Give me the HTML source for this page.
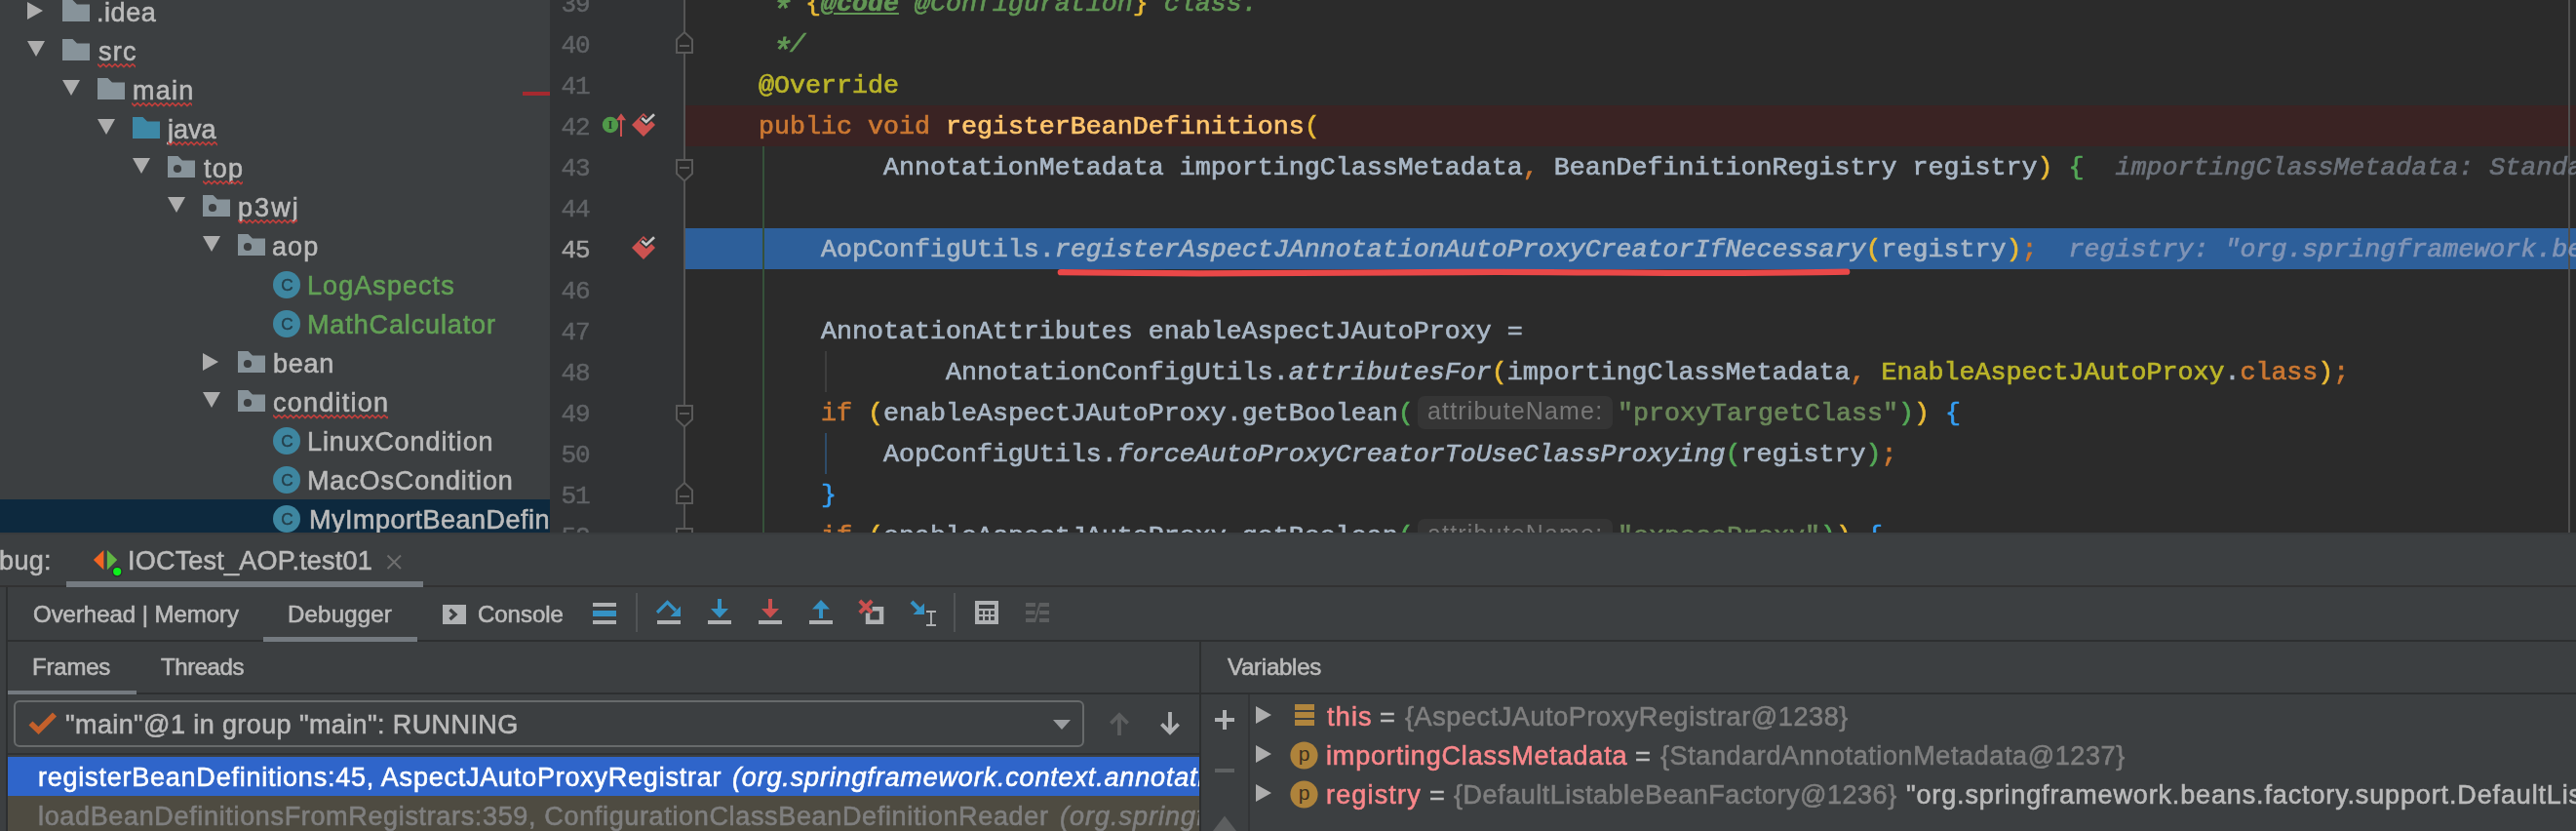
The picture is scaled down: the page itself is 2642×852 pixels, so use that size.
<!DOCTYPE html>
<html lang="en"><head><meta charset="utf-8"><title>IDE debug</title><style>
html,body{margin:0;padding:0;background:#2b2b2b;}
body{width:2642px;height:852px;overflow:hidden;position:relative;font-family:"Liberation Sans", sans-serif;-webkit-font-smoothing:antialiased;}
.t,.cl,.ln{will-change:transform}
.b{position:absolute;display:block}
.t{position:absolute;white-space:pre;height:40px;line-height:40px;-webkit-text-stroke:0.6px currentColor}
.cl{position:absolute;left:150px;height:42px;line-height:42px;white-space:pre;font-family:"Liberation Mono", monospace;font-size:26.667px;color:#a9b7c6;letter-spacing:-0.003px;-webkit-text-stroke:0.7px currentColor}
.ln{position:absolute;left:0;width:40.4px;text-align:right;height:42px;line-height:44px;font-family:"Liberation Mono", monospace;font-size:26px;color:#606366;letter-spacing:-1.1px;-webkit-text-stroke:0.5px currentColor}
.ast{display:inline-block;position:relative;top:9px;transform:scale(1.3)}
.i{font-style:italic} .bu{font-weight:bold;text-decoration:underline}
.k{color:#cc7832} .m{color:#ffc66d} .a{color:#bbb529} .d{color:#629755} .s{color:#6a8759}
.y{color:#e8ba36} .g{color:#54a857} .q{color:#359ff4} .h{color:#6c727b} .h2{color:#8094b6}
.hint{display:inline-block;box-sizing:border-box;vertical-align:top;width:199.8px;margin:3px 5.5px 0 4px;height:34px;line-height:30px;border-radius:7px;background:#353535;color:#787878;font-family:"Liberation Sans", sans-serif;font-size:25px;letter-spacing:1.17px;text-align:center;-webkit-text-stroke:0;text-indent:1px}
</style></head>
<body>
<div class="b" style="left:0px;top:0px;width:564px;height:546px;background:#3c3f41;"></div>
<div class="b" style="left:564px;top:0px;width:139px;height:546px;background:#313335;"></div>
<div class="b" style="left:703px;top:0px;width:1939px;height:546px;background:#2b2b2b;"></div>
<div class="b" style="left:0px;top:546px;width:2642px;height:306px;background:#3c3f41;"></div>
<div class="b" style="left:0;top:0;width:564px;height:546px;overflow:hidden">
<div class="b" style="left:0px;top:512px;width:564px;height:40px;background:#0d293e;"></div>
<svg class="b" style="left:28px;top:2px;" width="16" height="18" viewBox="0 0 16 18"><path d="M0,0 L16,9 L0,18 Z" fill="#adadad"/></svg>
<svg class="b" style="left:64px;top:0px;" width="28" height="22" viewBox="0 0 28 22"><path d="M0,0 H10.5 L15,4.5 H28 V22 H0 Z" fill="#87939a"/></svg>
<div id="tree0" class="t " style="left:99.00px;top:-6.96px;font-size:27px;color:#bbbbbb;letter-spacing:0.550px;">.idea</div>
<svg class="b" style="left:28px;top:42px;" width="18" height="16" viewBox="0 0 18 16"><path d="M0,0 L18,0 L9,16 Z" fill="#adadad"/></svg>
<svg class="b" style="left:64px;top:40px;" width="28" height="22" viewBox="0 0 28 22"><path d="M0,0 H10.5 L15,4.5 H28 V22 H0 Z" fill="#87939a"/></svg>
<div id="tree1" class="t " style="left:101.00px;top:33.04px;font-size:27px;color:#bbbbbb;letter-spacing:1.200px;">src</div>
<svg class="b" style="left:99.6px;top:65.4px;" width="39.6" height="5" viewBox="0 0 39.6 5"><polyline points="0,0.7 3,3.6 6,0.7 9,3.6 12,0.7 15,3.6 18,0.7 21,3.6 24,0.7 27,3.6 30,0.7 33,3.6 36,0.7 39,3.6 42,0.7" fill="none" stroke="#bc3f3c" stroke-width="1.8"/></svg>
<svg class="b" style="left:64px;top:82px;" width="18" height="16" viewBox="0 0 18 16"><path d="M0,0 L18,0 L9,16 Z" fill="#adadad"/></svg>
<svg class="b" style="left:100px;top:80px;" width="28" height="22" viewBox="0 0 28 22"><path d="M0,0 H10.5 L15,4.5 H28 V22 H0 Z" fill="#87939a"/></svg>
<div id="tree2" class="t " style="left:135.50px;top:73.04px;font-size:27px;color:#bbbbbb;letter-spacing:1.266px;">main</div>
<svg class="b" style="left:135.3px;top:105.4px;" width="61.7" height="5" viewBox="0 0 61.7 5"><polyline points="0,0.7 3,3.6 6,0.7 9,3.6 12,0.7 15,3.6 18,0.7 21,3.6 24,0.7 27,3.6 30,0.7 33,3.6 36,0.7 39,3.6 42,0.7 45,3.6 48,0.7 51,3.6 54,0.7 57,3.6 60,0.7 63,3.6" fill="none" stroke="#bc3f3c" stroke-width="1.8"/></svg>
<svg class="b" style="left:100px;top:122px;" width="18" height="16" viewBox="0 0 18 16"><path d="M0,0 L18,0 L9,16 Z" fill="#adadad"/></svg>
<svg class="b" style="left:136px;top:120px;" width="28" height="22" viewBox="0 0 28 22"><path d="M0,0 H10.5 L15,4.5 H28 V22 H0 Z" fill="#3d88a6"/></svg>
<div id="tree3" class="t " style="left:172.00px;top:113.04px;font-size:27px;color:#bbbbbb;">java</div>
<svg class="b" style="left:172px;top:145.4px;" width="51" height="5" viewBox="0 0 51 5"><polyline points="0,0.7 3,3.6 6,0.7 9,3.6 12,0.7 15,3.6 18,0.7 21,3.6 24,0.7 27,3.6 30,0.7 33,3.6 36,0.7 39,3.6 42,0.7 45,3.6 48,0.7 51,3.6 54,0.7" fill="none" stroke="#bc3f3c" stroke-width="1.8"/></svg>
<svg class="b" style="left:136px;top:162px;" width="18" height="16" viewBox="0 0 18 16"><path d="M0,0 L18,0 L9,16 Z" fill="#adadad"/></svg>
<svg class="b" style="left:172px;top:160px;" width="28" height="22" viewBox="0 0 28 22"><path d="M0,0 H10.5 L15,4.5 H28 V22 H0 Z" fill="#87939a"/><circle cx="10" cy="13" r="4.1" fill="#3c3f41"/></svg>
<div id="tree4" class="t " style="left:208.50px;top:153.04px;font-size:27px;color:#bbbbbb;letter-spacing:1.200px;">top</div>
<svg class="b" style="left:207.7px;top:185.4px;" width="41.6" height="5" viewBox="0 0 41.6 5"><polyline points="0,0.7 3,3.6 6,0.7 9,3.6 12,0.7 15,3.6 18,0.7 21,3.6 24,0.7 27,3.6 30,0.7 33,3.6 36,0.7 39,3.6 42,0.7" fill="none" stroke="#bc3f3c" stroke-width="1.8"/></svg>
<svg class="b" style="left:172px;top:202px;" width="18" height="16" viewBox="0 0 18 16"><path d="M0,0 L18,0 L9,16 Z" fill="#adadad"/></svg>
<svg class="b" style="left:208px;top:200px;" width="28" height="22" viewBox="0 0 28 22"><path d="M0,0 H10.5 L15,4.5 H28 V22 H0 Z" fill="#87939a"/><circle cx="10" cy="13" r="4.1" fill="#3c3f41"/></svg>
<div id="tree5" class="t " style="left:244.00px;top:193.04px;font-size:27px;color:#bbbbbb;letter-spacing:2.067px;">p3wj</div>
<svg class="b" style="left:243.6px;top:225.4px;" width="61.3" height="5" viewBox="0 0 61.3 5"><polyline points="0,0.7 3,3.6 6,0.7 9,3.6 12,0.7 15,3.6 18,0.7 21,3.6 24,0.7 27,3.6 30,0.7 33,3.6 36,0.7 39,3.6 42,0.7 45,3.6 48,0.7 51,3.6 54,0.7 57,3.6 60,0.7 63,3.6" fill="none" stroke="#bc3f3c" stroke-width="1.8"/></svg>
<svg class="b" style="left:208px;top:242px;" width="18" height="16" viewBox="0 0 18 16"><path d="M0,0 L18,0 L9,16 Z" fill="#adadad"/></svg>
<svg class="b" style="left:244px;top:240px;" width="28" height="22" viewBox="0 0 28 22"><path d="M0,0 H10.5 L15,4.5 H28 V22 H0 Z" fill="#87939a"/><circle cx="10" cy="13" r="4.1" fill="#3c3f41"/></svg>
<div id="tree6" class="t " style="left:279.00px;top:233.04px;font-size:27px;color:#bbbbbb;letter-spacing:1.100px;">aop</div>
<svg class="b" style="left:280px;top:278px;" width="28" height="28" viewBox="0 0 28 28"><circle cx="14" cy="14" r="14" fill="#3e86a0"/><text x="14.4" y="20.2" text-anchor="middle" font-family="Liberation Sans, sans-serif" font-size="17.2" fill="#25404c" stroke="#25404c" stroke-width="0.45">C</text></svg>
<div id="tree7" class="t " style="left:315.00px;top:273.04px;font-size:27px;color:#62a055;letter-spacing:1.066px;">LogAspects</div>
<svg class="b" style="left:280px;top:318px;" width="28" height="28" viewBox="0 0 28 28"><circle cx="14" cy="14" r="14" fill="#3e86a0"/><text x="14.4" y="20.2" text-anchor="middle" font-family="Liberation Sans, sans-serif" font-size="17.2" fill="#25404c" stroke="#25404c" stroke-width="0.45">C</text></svg>
<div id="tree8" class="t " style="left:315.00px;top:313.04px;font-size:27px;color:#62a055;letter-spacing:0.876px;">MathCalculator</div>
<svg class="b" style="left:208px;top:362px;" width="16" height="18" viewBox="0 0 16 18"><path d="M0,0 L16,9 L0,18 Z" fill="#adadad"/></svg>
<svg class="b" style="left:244px;top:360px;" width="28" height="22" viewBox="0 0 28 22"><path d="M0,0 H10.5 L15,4.5 H28 V22 H0 Z" fill="#87939a"/><circle cx="10" cy="13" r="4.1" fill="#3c3f41"/></svg>
<div id="tree9" class="t " style="left:280.00px;top:353.04px;font-size:27px;color:#bbbbbb;letter-spacing:0.734px;">bean</div>
<svg class="b" style="left:208px;top:402px;" width="18" height="16" viewBox="0 0 18 16"><path d="M0,0 L18,0 L9,16 Z" fill="#adadad"/></svg>
<svg class="b" style="left:244px;top:400px;" width="28" height="22" viewBox="0 0 28 22"><path d="M0,0 H10.5 L15,4.5 H28 V22 H0 Z" fill="#87939a"/><circle cx="10" cy="13" r="4.1" fill="#3c3f41"/></svg>
<div id="tree10" class="t " style="left:280.00px;top:393.04px;font-size:27px;color:#bbbbbb;letter-spacing:1.227px;">condition</div>
<svg class="b" style="left:280px;top:425.4px;" width="117.7" height="5" viewBox="0 0 117.7 5"><polyline points="0,0.7 3,3.6 6,0.7 9,3.6 12,0.7 15,3.6 18,0.7 21,3.6 24,0.7 27,3.6 30,0.7 33,3.6 36,0.7 39,3.6 42,0.7 45,3.6 48,0.7 51,3.6 54,0.7 57,3.6 60,0.7 63,3.6 66,0.7 69,3.6 72,0.7 75,3.6 78,0.7 81,3.6 84,0.7 87,3.6 90,0.7 93,3.6 96,0.7 99,3.6 102,0.7 105,3.6 108,0.7 111,3.6 114,0.7 117,3.6 120,0.7" fill="none" stroke="#bc3f3c" stroke-width="1.8"/></svg>
<svg class="b" style="left:280px;top:438px;" width="28" height="28" viewBox="0 0 28 28"><circle cx="14" cy="14" r="14" fill="#3e86a0"/><text x="14.4" y="20.2" text-anchor="middle" font-family="Liberation Sans, sans-serif" font-size="17.2" fill="#25404c" stroke="#25404c" stroke-width="0.45">C</text></svg>
<div id="tree11" class="t " style="left:315.00px;top:433.04px;font-size:27px;color:#bbbbbb;letter-spacing:0.924px;">LinuxCondition</div>
<svg class="b" style="left:280px;top:478px;" width="28" height="28" viewBox="0 0 28 28"><circle cx="14" cy="14" r="14" fill="#3e86a0"/><text x="14.4" y="20.2" text-anchor="middle" font-family="Liberation Sans, sans-serif" font-size="17.2" fill="#25404c" stroke="#25404c" stroke-width="0.45">C</text></svg>
<div id="tree12" class="t " style="left:315.00px;top:473.04px;font-size:27px;color:#bbbbbb;letter-spacing:0.861px;">MacOsCondition</div>
<svg class="b" style="left:280px;top:518px;" width="28" height="28" viewBox="0 0 28 28"><circle cx="14" cy="14" r="14" fill="#3e86a0"/><text x="14.4" y="20.2" text-anchor="middle" font-family="Liberation Sans, sans-serif" font-size="17.2" fill="#25404c" stroke="#25404c" stroke-width="0.45">C</text></svg>
<div id="tree13" class="t " style="left:316.80px;top:513.04px;font-size:27px;color:#bbbbbb;letter-spacing:0.500px;">MyImportBeanDefinitionRegistrar</div>
<div class="b" style="left:536px;top:94px;width:28px;height:4px;background:#a52a2f;"></div>
</div>
<div class="b" style="left:564px;top:0;width:2078px;height:546px;overflow:hidden">
<div class="b" style="left:139px;top:108px;width:1939px;height:42px;background:#3a2323;"></div>
<div class="b" style="left:139px;top:234px;width:1939px;height:42px;background:#2d5f9a;"></div>
<div class="b" style="left:2070px;top:0px;width:2px;height:546px;background:#4f4f4f;"></div>
<div class="b" style="left:137px;top:0px;width:2px;height:546px;background:#555555;"></div>
<div class="b" style="left:218px;top:150px;width:2px;height:396px;background:#36513a;"></div>
<div class="b" style="left:282px;top:360px;width:2px;height:42px;background:#3e3e3e;"></div>
<div class="b" style="left:282px;top:444px;width:2px;height:42px;background:#2f4c69;"></div>
<svg class="b" style="left:128px;top:31px;" width="20" height="25" viewBox="0 0 20 25"><path d="M2,23 H18 V9.5 L10,2 L2,9.5 Z" fill="#2b2b2b" stroke="#5a5a5a" stroke-width="2"/><rect x="5" y="15" width="10" height="2" fill="#5a5a5a"/></svg>
<svg class="b" style="left:128px;top:162px;" width="20" height="25" viewBox="0 0 20 25"><path d="M2,2 H18 V16 L10,23.5 L2,16 Z" fill="#2b2b2b" stroke="#5a5a5a" stroke-width="2"/><rect x="5" y="9" width="10" height="2" fill="#5a5a5a"/></svg>
<svg class="b" style="left:128px;top:414px;" width="20" height="25" viewBox="0 0 20 25"><path d="M2,2 H18 V16 L10,23.5 L2,16 Z" fill="#2b2b2b" stroke="#5a5a5a" stroke-width="2"/><rect x="5" y="9" width="10" height="2" fill="#5a5a5a"/></svg>
<svg class="b" style="left:128px;top:493px;" width="20" height="25" viewBox="0 0 20 25"><path d="M2,23 H18 V9.5 L10,2 L2,9.5 Z" fill="#2b2b2b" stroke="#5a5a5a" stroke-width="2"/><rect x="5" y="15" width="10" height="2" fill="#5a5a5a"/></svg>
<svg class="b" style="left:128px;top:540px;" width="20" height="25" viewBox="0 0 20 25"><path d="M2,2 H18 V16 L10,23.5 L2,16 Z" fill="#2b2b2b" stroke="#5a5a5a" stroke-width="2"/><rect x="5" y="9" width="10" height="2" fill="#5a5a5a"/></svg>
<div class="ln" style="top:-17px;color:#606366">39</div>
<div class="ln" style="top:25px;color:#606366">40</div>
<div class="ln" style="top:67px;color:#606366">41</div>
<div class="ln" style="top:109px;color:#606366">42</div>
<div class="ln" style="top:151px;color:#606366">43</div>
<div class="ln" style="top:193px;color:#606366">44</div>
<div class="ln" style="top:235px;color:#a4a3a3">45</div>
<div class="ln" style="top:277px;color:#606366">46</div>
<div class="ln" style="top:319px;color:#606366">47</div>
<div class="ln" style="top:361px;color:#606366">48</div>
<div class="ln" style="top:403px;color:#606366">49</div>
<div class="ln" style="top:445px;color:#606366">50</div>
<div class="ln" style="top:487px;color:#606366">51</div>
<div class="ln" style="top:529px;color:#606366">52</div>
<svg class="b" style="left:82px;top:112px;" width="30" height="34" viewBox="0 0 30 34"><path d="M14,4 L26,16 L14,28 L2,16 Z" fill="#cc5250"/><path d="M11.6,8.4 L16.8,13 L25.8,4.4" fill="none" stroke="#313335" stroke-width="6"/><path d="M12.3,9 L16.8,13 L25,5.2" fill="none" stroke="#c6c6c6" stroke-width="2.7"/></svg>
<svg class="b" style="left:82px;top:238px;" width="30" height="34" viewBox="0 0 30 34"><path d="M14,4 L26,16 L14,28 L2,16 Z" fill="#cc5250"/><path d="M11.6,8.4 L16.8,13 L25.8,4.4" fill="none" stroke="#313335" stroke-width="6"/><path d="M12.3,9 L16.8,13 L25,5.2" fill="none" stroke="#c6c6c6" stroke-width="2.7"/></svg>
<svg class="b" style="left:52px;top:114px;" width="28" height="28" viewBox="0 0 28 28"><circle cx="10" cy="14" r="8.2" fill="#50994a"/><text x="10" y="18.3" text-anchor="middle" font-family="Liberation Serif, serif" font-weight="bold" font-size="12.5" fill="#233b26">I</text><path d="M21,26 V5" stroke="#cc5250" stroke-width="2" fill="none"/><path d="M15.9,9.3 L21,2.3 L26.1,9.3 Z" fill="#cc5250"/></svg>
<div class="cl" id="cl39" style="top:-17px">     <span class="d i ast">*</span> <span class="y">{</span><span class="d i bu">@code</span><span class="d i"> @Configuration</span><span class="y">}</span><span class="d i"> class.</span></div>
<div class="cl" id="cl40" style="top:25px">     <span class="d i ast">*</span><span class="d i">/</span></div>
<div class="cl" id="cl41" style="top:67px">    <span class="a">@Override</span></div>
<div class="cl" id="cl42" style="top:109px">    <span class="k">public void </span><span class="m">registerBeanDefinitions</span><span class="y">(</span></div>
<div class="cl" id="cl43" style="top:151px">            AnnotationMetadata importingClassMetadata<span class="k">,</span> BeanDefinitionRegistry registry<span class="y">)</span> <span class="g">{</span>  <span class="h i">importingClassMetadata: Standard</span></div>
<div class="cl" id="cl44" style="top:193px"></div>
<div class="cl" id="cl45" style="top:235px">        AopConfigUtils.<span class="i">registerAspectJAnnotationAutoProxyCreatorIfNecessary</span><span class="y">(</span>registry<span class="y">)</span><span class="k">;</span>  <span class="h2 i">registry: "org.springframework.beans</span></div>
<div class="cl" id="cl46" style="top:277px"></div>
<div class="cl" id="cl47" style="top:319px">        AnnotationAttributes enableAspectJAutoProxy =</div>
<div class="cl" id="cl48" style="top:361px">                AnnotationConfigUtils.<span class="i">attributesFor</span><span class="y">(</span>importingClassMetadata<span class="k">,</span> <span class="a">EnableAspectJAutoProxy</span>.<span class="k">class</span><span class="y">)</span><span class="k">;</span></div>
<div class="cl" id="cl49" style="top:403px">        <span class="k">if</span> <span class="y">(</span>enableAspectJAutoProxy.getBoolean<span class="g">(</span><span class="hint">attributeName:</span><span class="s">"proxyTargetClass"</span><span class="g">)</span><span class="y">)</span> <span class="q">{</span></div>
<div class="cl" id="cl50" style="top:445px">            AopConfigUtils.<span class="i">forceAutoProxyCreatorToUseClassProxying</span><span class="g">(</span>registry<span class="g">)</span><span class="k">;</span></div>
<div class="cl" id="cl51" style="top:487px">        <span class="q">}</span></div>
<div class="cl" id="cl52" style="top:529px">        <span class="k">if</span> <span class="y">(</span>enableAspectJAutoProxy.getBoolean<span class="g">(</span><span class="hint">attributeName:</span><span class="s">"exposeProxy"</span><span class="g">)</span><span class="y">)</span> <span class="q">{</span></div>
<svg class="b" style="left:516px;top:270px;" width="830" height="16" viewBox="0 0 830 16"><path d="M7.8,9.2 C60,9.4 100,10.3 150,10.3 S340,9.6 420,9.0 S600,10 680,9.9 S780,9 814.2,8.7" fill="none" stroke="#ea4848" stroke-width="6.3" stroke-linecap="round"/></svg>
</div>
<div class="b" style="left:0px;top:546px;width:2642px;height:1.5px;background:#383b3d;"></div>
<div class="b" style="left:0px;top:600px;width:2642px;height:2px;background:#323232;"></div>
<div class="b" style="left:68px;top:596px;width:366px;height:6px;background:#747a80;"></div>
<div id="dbg" class="t " style="left:-36.00px;top:555.14px;font-size:27px;color:#bbbbbb;letter-spacing:0.300px;">Debug:</div>
<div id="tab" class="t " style="left:131.00px;top:555.14px;font-size:27px;color:#bbbbbb;letter-spacing:0.213px;">IOCTest_AOP.test01</div>
<svg class="b" style="left:95px;top:562px;" width="32" height="32" viewBox="0 0 32 32"><path d="M11.4,2 V22.2 L0.9,12.1 Z" fill="#f26522"/><path d="M14.9,2 L25.2,12.1 L14.9,22.2 Z" fill="#62b543"/><circle cx="25.2" cy="24.1" r="5.4" fill="#2a2c2d"/><circle cx="25.2" cy="24.1" r="4.1" fill="#0df01c"/></svg>
<svg class="b" style="left:396px;top:568px;" width="17" height="17" viewBox="0 0 17 17"><path d="M1.5,1.5 L15,15 M15,1.5 L1.5,15" stroke="#6e6e6e" stroke-width="2" fill="none"/></svg>
<div class="b" style="left:6px;top:602px;width:2px;height:250px;background:#2d2f30;"></div>
<div class="b" style="left:8px;top:656px;width:2634px;height:2px;background:#2d2f30;"></div>
<div class="b" style="left:270px;top:653px;width:158px;height:5px;background:#747a80;"></div>
<div id="ovh" class="t " style="left:33.50px;top:610.18px;font-size:24px;color:#bbbbbb;letter-spacing:-0.038px;">Overhead | Memory</div>
<div id="dbgr" class="t " style="left:294.50px;top:610.18px;font-size:24px;color:#bbbbbb;letter-spacing:0.201px;">Debugger</div>
<div id="cons" class="t " style="left:489.50px;top:610.18px;font-size:24px;color:#bbbbbb;letter-spacing:-0.033px;">Console</div>
<svg class="b" style="left:454px;top:620px;" width="24" height="20" viewBox="0 0 24 20"><rect width="24" height="20" fill="#afb1b3"/><path d="M7.5,5 L13,10 L7.5,15" fill="none" stroke="#3c3f41" stroke-width="3.4"/></svg>
<svg class="b" style="left:608px;top:616px;" width="24" height="26" viewBox="0 0 24 26"><rect y="2" width="24" height="4" fill="#afb1b3"/><rect y="10" width="24" height="6" fill="#3592c4"/><rect y="20" width="24" height="4" fill="#afb1b3"/></svg>
<div class="b" style="left:652px;top:608px;width:2px;height:40px;background:#515456;"></div>
<svg class="b" style="left:672px;top:612px;" width="28" height="30" viewBox="0 0 28 30"><path d="M2,16 L12.5,5.5 L21,14" fill="none" stroke="#3592c4" stroke-width="3.2"/><path d="M26,9.5 V20 H15.5 Z" fill="#3592c4"/><rect x="2" y="24" width="24" height="4" fill="#afb1b3"/></svg>
<svg class="b" style="left:724px;top:612px;" width="28" height="30" viewBox="0 0 28 30"><path d="M14,2 V14" stroke="#3592c4" stroke-width="4" fill="none"/><path d="M5,12 H23 L14,21.5 Z" fill="#3592c4"/><rect x="2" y="24" width="24" height="4" fill="#afb1b3"/></svg>
<svg class="b" style="left:776px;top:612px;" width="28" height="30" viewBox="0 0 28 30"><path d="M14,2 V14" stroke="#c9504f" stroke-width="4" fill="none"/><path d="M5,12 H23 L14,21.5 Z" fill="#c9504f"/><rect x="2" y="24" width="24" height="4" fill="#afb1b3"/></svg>
<svg class="b" style="left:828px;top:612px;" width="28" height="30" viewBox="0 0 28 30"><path d="M14,22 V10" stroke="#3592c4" stroke-width="4" fill="none"/><path d="M5,12.5 H23 L14,3 Z" fill="#3592c4"/><rect x="2" y="24" width="24" height="4" fill="#afb1b3"/></svg>
<svg class="b" style="left:880px;top:614px;" width="28" height="28" viewBox="0 0 28 28"><path d="M1.8,2 L14.2,14.2 M14.2,2 L1.8,14.2" stroke="#c9504f" stroke-width="4" fill="none"/><path d="M14.6,10.25 H24.05 V23.85 H10.05 V14.6" fill="none" stroke="#afb1b3" stroke-width="4.5"/></svg>
<svg class="b" style="left:932px;top:614px;" width="30" height="30" viewBox="0 0 30 30"><path d="M3,3 L12,12" stroke="#3592c4" stroke-width="4" fill="none"/><path d="M16,4.5 V16 H4.5 Z" fill="#3592c4"/><path d="M18,13 H28 M18,27 H28 M23,13 V27" stroke="#afb1b3" stroke-width="1.8" fill="none"/></svg>
<div class="b" style="left:978px;top:608px;width:2px;height:40px;background:#515456;"></div>
<svg class="b" style="left:1000px;top:616px;" width="24" height="24" viewBox="0 0 24 24"><rect width="24" height="24" fill="#afb1b3"/><rect x="4" y="4" width="16" height="4" fill="#3c3f41"/><rect x="4.2" y="10.2" width="3.8" height="3.8" fill="#3c3f41"/><rect x="4.2" y="16.1" width="3.8" height="3.8" fill="#3c3f41"/><rect x="10.1" y="10.2" width="3.8" height="3.8" fill="#3c3f41"/><rect x="10.1" y="16.1" width="3.8" height="3.8" fill="#3c3f41"/><rect x="16.0" y="10.2" width="3.8" height="3.8" fill="#3c3f41"/><rect x="16.0" y="16.1" width="3.8" height="3.8" fill="#3c3f41"/></svg>
<svg class="b" style="left:1052px;top:616px;" width="24" height="24" viewBox="0 0 24 24"><path d="M0,4 H10 M14.5,4 H24 M0,12 H9.5 M14,12 H24 M0,20 H9 M14,20 H24" stroke="#5c5e5f" stroke-width="4" fill="none"/><path d="M9,22 L15,2" stroke="#5c5e5f" stroke-width="2" fill="none"/></svg>
<div class="b" style="left:1230px;top:658px;width:2px;height:194px;background:#2d2f30;"></div>
<div class="b" style="left:8px;top:710px;width:2634px;height:2px;background:#2d2f30;"></div>
<div class="b" style="left:8px;top:708px;width:132px;height:4px;background:#747a80;"></div>
<div class="b" style="left:8px;top:772px;width:1222px;height:2px;background:#2f3133;"></div>
<div id="frames" class="t " style="left:32.50px;top:663.88px;font-size:24px;color:#bbbbbb;letter-spacing:-0.200px;">Frames</div>
<div id="threads" class="t " style="left:164.50px;top:663.88px;font-size:24px;color:#bbbbbb;letter-spacing:-0.433px;">Threads</div>
<div id="vars" class="t " style="left:1259.00px;top:663.88px;font-size:24px;color:#bbbbbb;letter-spacing:-0.250px;">Variables</div>
<div class="b" style="left:14px;top:718px;width:1098px;height:48px;box-sizing:border-box;border:2px solid #676a6b;border-radius:6px"></div>
<svg class="b" style="left:29px;top:729px;" width="30" height="24" viewBox="0 0 30 24"><path d="M2.5,12.5 L10.5,20 L27,3.5" fill="none" stroke="#c4602b" stroke-width="5.8"/></svg>
<div id="thr" class="t " style="left:66.50px;top:723.14px;font-size:27px;color:#bbbbbb;letter-spacing:0.401px;">"main"@1 in group "main": RUNNING</div>
<svg class="b" style="left:1080px;top:738px;" width="18" height="10" viewBox="0 0 18 10"><path d="M0,0 H18 L9,10 Z" fill="#9a9da0"/></svg>
<svg class="b" style="left:1137px;top:729px;" width="22" height="26" viewBox="0 0 22 26"><path d="M11,25 V4 M2.4,12.6 L11,4 L19.6,12.6" fill="none" stroke="#5c5e5f" stroke-width="3.8"/></svg>
<svg class="b" style="left:1189px;top:729px;" width="22" height="26" viewBox="0 0 22 26"><path d="M11,1 V22 M2.4,13.4 L11,22 L19.6,13.4" fill="none" stroke="#afb1b3" stroke-width="3.8"/></svg>
<div class="b" style="left:0;top:776px;width:1230px;height:76px;overflow:hidden">
<div class="b" style="left:8px;top:0px;width:1222px;height:40px;background:#2f65ca;"></div>
<div class="b" style="left:8px;top:40px;width:1222px;height:40px;background:#4e4b41;"></div>
<div id="fr1a" class="t " style="left:39.00px;top:0.64px;font-size:27px;color:#ffffff;letter-spacing:0.773px;">registerBeanDefinitions:45, AspectJAutoProxyRegistrar</div>
<div id="fr1b" class="t " style="left:751.40px;top:0.64px;font-size:27px;color:#ffffff;letter-spacing:0.840px;"><i>(org.springframework.context.annotation)</i></div>
<div id="fr2a" class="t " style="left:39.00px;top:40.64px;font-size:27px;color:#7f7f7f;letter-spacing:0.656px;">loadBeanDefinitionsFromRegistrars:359, ConfigurationClassBeanDefinitionReader</div>
<div id="fr2b" class="t " style="left:1086.80px;top:40.64px;font-size:27px;color:#7f7f7f;letter-spacing:1.000px;"><i>(org.springframework.context.annotation)</i></div>
</div>
<div class="b" style="left:1279.5px;top:712px;width:2px;height:140px;background:#333537;"></div>
<svg class="b" style="left:1246px;top:728px;" width="20" height="20" viewBox="0 0 20 20"><path d="M10,0 V20 M0,10 H20" stroke="#afb1b3" stroke-width="4" fill="none"/></svg>
<div class="b" style="left:1246px;top:788px;width:20px;height:4px;background:#5e6162;"></div>
<svg class="b" style="left:1244px;top:836px;" width="24" height="16" viewBox="0 0 24 16"><path d="M0,16 L12,0.5 L24,16 Z" fill="#5c5e5f"/></svg>
<svg class="b" style="left:1288px;top:724px;" width="16" height="18" viewBox="0 0 16 18"><path d="M0,0 L16,9 L0,18 Z" fill="#adadad"/></svg>
<svg class="b" style="left:1288px;top:764px;" width="16" height="18" viewBox="0 0 16 18"><path d="M0,0 L16,9 L0,18 Z" fill="#adadad"/></svg>
<svg class="b" style="left:1288px;top:804px;" width="16" height="18" viewBox="0 0 16 18"><path d="M0,0 L16,9 L0,18 Z" fill="#adadad"/></svg>
<svg class="b" style="left:1328px;top:722px;" width="20" height="22" viewBox="0 0 20 22"><rect y="0" width="20" height="6" fill="#b0853d"/><rect y="8" width="20" height="6" fill="#b0853d"/><rect y="16" width="20" height="6" fill="#b0853d"/></svg>
<svg class="b" style="left:1323.2px;top:759.5px;" width="29" height="29" viewBox="0 0 29 29"><circle cx="14.5" cy="14.5" r="14.1" fill="#ae833b"/><text x="14.5" y="20" text-anchor="middle" font-family="Liberation Sans, sans-serif" font-size="21" fill="#3a3020">p</text></svg>
<svg class="b" style="left:1323.2px;top:799.5px;" width="29" height="29" viewBox="0 0 29 29"><circle cx="14.5" cy="14.5" r="14.1" fill="#ae833b"/><text x="14.5" y="20" text-anchor="middle" font-family="Liberation Sans, sans-serif" font-size="21" fill="#3a3020">p</text></svg>
<div id="v0a" class="t " style="left:1360.50px;top:714.64px;font-size:27px;color:#fa878b;letter-spacing:1.201px;">this</div>
<div id="v0e" class="t " style="left:1415.10px;top:715.64px;font-size:27px;color:#bbbbbb;">=</div>
<div id="v0b" class="t " style="left:1440.50px;top:714.64px;font-size:27px;color:#7f7f7f;letter-spacing:0.601px;">{AspectJAutoProxyRegistrar@1238}</div>
<div id="v1a" class="t " style="left:1359.50px;top:754.64px;font-size:27px;color:#fa878b;letter-spacing:0.829px;">importingClassMetadata</div>
<div id="v1e" class="t " style="left:1677.00px;top:755.64px;font-size:27px;color:#bbbbbb;">=</div>
<div id="v1b" class="t " style="left:1702.50px;top:754.64px;font-size:27px;color:#7f7f7f;letter-spacing:0.606px;">{StandardAnnotationMetadata@1237}</div>
<div id="v2a" class="t " style="left:1359.50px;top:794.64px;font-size:27px;color:#fa878b;letter-spacing:1.170px;">registry</div>
<div id="v2e" class="t " style="left:1465.80px;top:795.64px;font-size:27px;color:#bbbbbb;">=</div>
<div id="v2b" class="t " style="left:1490.50px;top:794.64px;font-size:27px;color:#7f7f7f;letter-spacing:0.531px;">{DefaultListableBeanFactory@1236}</div>
<div id="v2c" class="t " style="left:1954.70px;top:794.64px;font-size:27px;color:#bbbbbb;letter-spacing:0.860px;">"org.springframework.beans.factory.support.DefaultListableBeanFactory</div>
</body></html>
